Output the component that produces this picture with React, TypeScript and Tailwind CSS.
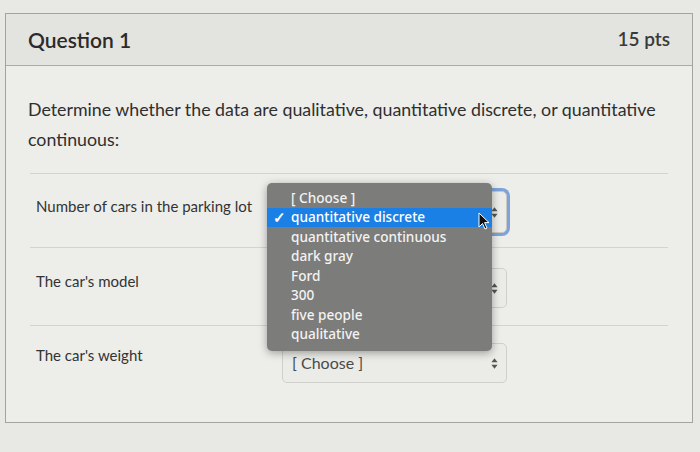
import React from "react";

const options = [
  "[ Choose ]",
  "quantitative discrete",
  "quantitative continuous",
  "dark gray",
  "Ford",
  "300",
  "five people",
  "qualitative",
];

function Arrows() {
  return (
    <svg viewBox="0 0 8 14" className="h-[13px] w-[7px]" aria-hidden="true">
      <path d="M4 1 L7.5 5.5 H0.5 Z" fill="#555" />
      <path d="M4 13 L7.5 8.5 H0.5 Z" fill="#555" />
    </svg>
  );
}

function SelectBox({ focused, text }: { focused?: boolean; text?: string }) {
  return (
    <div
      className={
        focused
          ? "flex h-[42px] w-[225px] items-center justify-between rounded-[5px] border border-[#c8c8c4] bg-[#ececE8] pl-[9px] pr-[8px] shadow-[0_0_0_3px_#7ea3d9]"
          : "flex h-[40px] w-[225px] items-center justify-between rounded-[5px] border border-[#cfcfcb] bg-[#ebebe7] pl-[9px] pr-[8px]"
      }
    >
      <span className="text-[16px] text-[#4a4a4a]">{text}</span>
      <Arrows />
    </div>
  );
}

function Cursor() {
  return (
    <svg viewBox="0 0 12 18" className="absolute left-[478px] top-[212px] h-[18px] w-[12px]" aria-hidden="true">
      <path d="M1 1 L1 15 L4.5 11.5 L7 17 L9 16 L6.6 10.6 L11 10.6 Z" fill="#111" stroke="#fff" strokeWidth="1" />
    </svg>
  );
}

export default function App() {
  return (
    <div
      className="relative h-[452px] w-[700px] overflow-hidden bg-[#e8e8e4] pl-[5px] pt-[13px] text-[#2d3b45]"
      style={{ fontFamily: "Lato, 'Liberation Sans', sans-serif" }}
    >
      <div className="h-[410px] w-[688px] border border-[#a3a3a1] bg-[#ededea]">
        <div className="flex h-[52px] items-center justify-between border-b border-[#a9a9a7] bg-[#e3e3df] pl-[22px] pr-[22px]">
          <h2 className="text-[21px] font-semibold text-[#2b2b2b]">Question 1</h2>
          <span className="text-[19px] font-semibold text-[#3a3a3a]">15 pts</span>
        </div>

        <div className="px-[22px] pt-[28px]">
          <p className="text-[17.8px] leading-[30px] text-[#2f2f2f]">
            Determine whether the data are qualitative, quantitative discrete, or quantitative continuous:
          </p>
        </div>

        <div className="mx-[24px] mt-[19px]">
          <div className="flex h-[74px] border-t border-[#d3d3cf]">
            <div className="w-[252px] pl-[6px] pt-[22px] text-[15px] leading-[20px] text-[#333]">
              Number of cars in the parking lot
            </div>
            <div className="mt-[17px]">
              <SelectBox focused text="" />
            </div>
          </div>
          <div className="flex h-[78px] border-t border-[#d3d3cf]">
            <div className="w-[252px] pl-[6px] pt-[23px] text-[15px] leading-[20px] text-[#333]">
              The car's model
            </div>
            <div className="mt-[20px]">
              <SelectBox text="" />
            </div>
          </div>
          <div className="flex border-t border-[#d3d3cf]">
            <div className="w-[252px] pl-[6px] pt-[19px] text-[15px] leading-[20px] text-[#333]">
              The car's weight
            </div>
            <div className="mt-[17px]">
              <SelectBox text="[ Choose ]" />
            </div>
          </div>
        </div>
      </div>

      <div
        className="absolute left-[267px] top-[183px] w-[225px] rounded-[5px] bg-[#7c7c7a] pb-[7px] pt-[5px] shadow-[0_2px_8px_rgba(0,0,0,0.35)]"
        style={{ fontFamily: "'Noto Sans', 'Liberation Sans', sans-serif" }}
      >
        {options.map((o, i) => (
          <div
            key={o}
            className={
              i === 1
                ? "relative flex h-[19.5px] items-center bg-[#1b80e6] pl-[24px] text-[13.6px] font-medium text-white"
                : "relative flex h-[19.5px] items-center pl-[24px] text-[13.6px] font-medium text-[#f3f3f3]"
            }
          >
            {i === 1 && <span className="absolute left-[6px] text-[15px] font-bold">✓</span>}
            {o}
          </div>
        ))}
      </div>
      <Cursor />
    </div>
  );
}
